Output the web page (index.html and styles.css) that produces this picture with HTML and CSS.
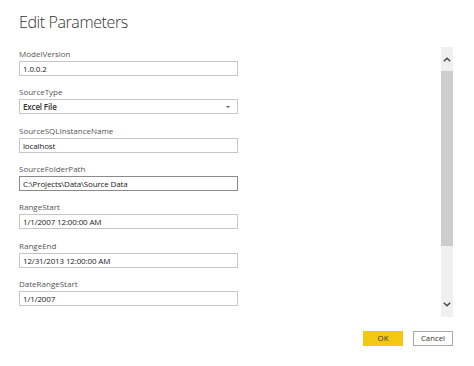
FILE: index.html
```html
<!DOCTYPE html>
<html>
<head>
<meta charset="utf-8">
<link rel="stylesheet" href="styles.css">
</head>
<body>
<div class="dialog">
  <h1 class="title">Edit Parameters</h1>
  <div class="main">
    <div class="fields">
      <div class="field">
        <div class="label">ModelVersion</div>
        <div class="input">1.0.0.2</div>
      </div>
      <div class="field">
        <div class="label">SourceType</div>
        <div class="input select"><span class="sel-text">Excel File</span><span class="caret"></span></div>
      </div>
      <div class="field">
        <div class="label">SourceSQLInstanceName</div>
        <div class="input">localhost</div>
      </div>
      <div class="field">
        <div class="label">SourceFolderPath</div>
        <div class="input focused">C:\Projects\Data\Source Data</div>
      </div>
      <div class="field">
        <div class="label">RangeStart</div>
        <div class="input">1/1/2007 12:00:00 AM</div>
      </div>
      <div class="field">
        <div class="label">RangeEnd</div>
        <div class="input">12/31/2013 12:00:00 AM</div>
      </div>
      <div class="field">
        <div class="label">DateRangeStart</div>
        <div class="input">1/1/2007</div>
      </div>
    </div>
    <div class="scrollbar">
      <div class="sb-btn sb-up">
        <svg width="8" height="5" viewBox="0 0 8 5"><polyline points="0.8,4.3 4,1.2 7.2,4.3" fill="none" stroke="#444" stroke-width="1.4"/></svg>
      </div>
      <div class="sb-thumb"></div>
      <div class="sb-track">
        <div class="sb-btn sb-down">
          <svg width="8" height="5" viewBox="0 0 8 5"><polyline points="0.8,0.7 4,3.8 7.2,0.7" fill="none" stroke="#444" stroke-width="1.4"/></svg>
        </div>
      </div>
    </div>
  </div>
  <div class="footer">
    <button class="btn btn-ok">OK</button>
    <button class="btn btn-cancel">Cancel</button>
  </div>
</div>
</body>
</html>
```

FILE: styles.css
```css
html, body {
  margin: 0;
  padding: 0;
  background: #ffffff;
}
.dialog {
  width: 474px;
  height: 366px;
  display: flex;
  flex-direction: column;
  font-family: "Open Sans", "Liberation Sans", sans-serif;
  color: #222;
  overflow: hidden;
}
.title {
  margin: 0;
  padding: 12px 0 0 19px;
  height: 20px;
  font-size: 16px;
  line-height: 20px;
  font-weight: 300;
  letter-spacing: -0.4px;
  color: #333;
}
.main {
  display: flex;
  margin-top: 15px;
  height: 270px;
}
.fields {
  width: 219px;
  margin-left: 19px;
  padding-top: 1px;
}
.field {
  margin-bottom: 10.33px;
}
.label {
  font-size: 8px;
  line-height: 12px;
  height: 12px;
  margin-bottom: 1px;
  color: #555;
}
.input {
  box-sizing: border-box;
  height: 15px;
  border: 1px solid #c6c6c6;
  padding: 0 3px;
  font-size: 8px;
  letter-spacing: -0.15px;
  line-height: 13px;
  color: #222;
  white-space: nowrap;
  overflow: hidden;
}
.input.focused {
  border-color: #8a8a8a;
}
.select {
  display: flex;
  align-items: center;
  justify-content: space-between;
}
.sel-text {
  font-weight: 600;
  color: #333;
}
.caret {
  width: 0;
  height: 0;
  border-left: 2px solid transparent;
  border-right: 2px solid transparent;
  border-top: 2px solid #555;
  margin-right: 4px;
}
.scrollbar {
  margin-left: auto;
  margin-right: 21px;
  width: 12px;
  height: 270px;
  display: flex;
  flex-direction: column;
  background: #f0f0f0;
}
.sb-btn {
  display: flex;
  align-items: center;
  justify-content: center;
}
.sb-up {
  height: 24px;
}
.sb-thumb {
  height: 175px;
  background: #cdcdcd;
}
.sb-track {
  flex: 1;
  display: flex;
  flex-direction: column;
  justify-content: flex-end;
}
.sb-down {
  height: 26px;
}
.footer {
  display: flex;
  justify-content: flex-end;
  gap: 10px;
  margin-top: 14px;
  padding-right: 21px;
}
.btn {
  box-sizing: border-box;
  width: 40px;
  height: 15px;
  padding: 0;
  font-family: "Open Sans", "Liberation Sans", sans-serif;
  font-size: 7.8px;
  line-height: 13px;
  color: #333;
  cursor: default;
}
.btn-ok {
  background: #f2c811;
  border: 1px solid #f2c811;
}
.btn-cancel {
  background: #ffffff;
  border: 1px solid #a8a8a8;
}
```
